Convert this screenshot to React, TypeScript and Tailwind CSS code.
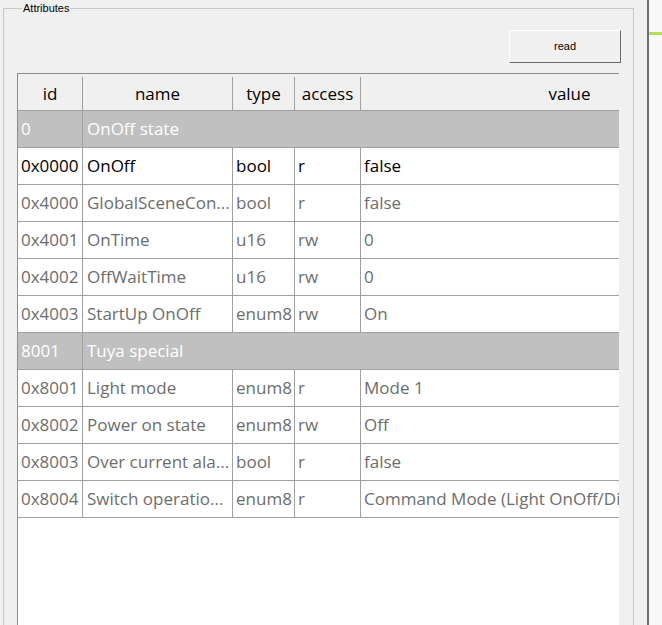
import React from 'react';

interface Attr {
  id: string;
  name: string;
  type?: string;
  access?: string;
  value?: string;
  group?: boolean;
  active?: boolean;
}

const rows: Attr[] = [
  { id: '0', name: 'OnOff state', group: true },
  { id: '0x0000', name: 'OnOff', type: 'bool', access: 'r', value: 'false', active: true },
  { id: '0x4000', name: 'GlobalSceneCon...', type: 'bool', access: 'r', value: 'false' },
  { id: '0x4001', name: 'OnTime', type: 'u16', access: 'rw', value: '0' },
  { id: '0x4002', name: 'OffWaitTime', type: 'u16', access: 'rw', value: '0' },
  { id: '0x4003', name: 'StartUp OnOff', type: 'enum8', access: 'rw', value: 'On' },
  { id: '8001', name: 'Tuya special', group: true },
  { id: '0x8001', name: 'Light mode', type: 'enum8', access: 'r', value: 'Mode 1' },
  { id: '0x8002', name: 'Power on state', type: 'enum8', access: 'rw', value: 'Off' },
  { id: '0x8003', name: 'Over current ala...', type: 'bool', access: 'r', value: 'false' },
  { id: '0x8004', name: 'Switch operatio...', type: 'enum8', access: 'r', value: 'Command Mode (Light OnOff/Dimmer)' },
];

export default function App() {
  return (
    <div
      className="flex h-[625px] w-[662px] overflow-hidden bg-[#f0f0f0]"
      style={{ fontFamily: '"Open Sans", sans-serif' }}
    >
      {/* left pane */}
      <div className="w-[647px] shrink-0 pl-[3px] pr-[13px] pt-[2px]">
        <fieldset className="h-[700px] border border-[#c8c8c8] pl-[13px] pr-[12px]">
          <legend
            className="ml-[5px] px-[1px] text-[11px] leading-[13px] text-black"
            style={{ fontFamily: '"Liberation Sans", Arial, sans-serif' }}
          >
            Attributes
          </legend>

          <div className="mt-[15px] flex justify-end">
            <button
              className="h-[33px] w-[112px] border border-t-white border-l-white border-b-[#6a6a6a] border-r-[#6a6a6a] bg-[#f0f0f0] text-[11px] text-black"
              style={{ fontFamily: '"Liberation Sans", Arial, sans-serif' }}
            >
              read
            </button>
          </div>

          <div className="mt-[10px] flex">
            <div className="h-[620px] w-[602px] overflow-hidden border-l border-t border-[#8c8c8c] bg-white">
              <div className="w-[800px] text-[17px]">
                {/* header */}
                <div className="flex h-[37px] border-b border-[#a0a0a0] bg-[#f0f0f0] pt-[3px] text-black">
                  <div className="flex w-[65px] items-center justify-center border-r border-[#a0a0a0]">id</div>
                  <div className="flex w-[150px] items-center justify-center border-r border-[#a0a0a0]">name</div>
                  <div className="flex w-[62px] items-center justify-center border-r border-[#a0a0a0]">type</div>
                  <div className="flex w-[66px] items-center justify-center border-r border-[#a0a0a0]">access</div>
                  <div className="flex w-[418px] items-center justify-center border-r border-[#a0a0a0]">value</div>
                </div>

                {rows.map((r) =>
                  r.group ? (
                    <div key={r.id} className="flex h-[37px] border-b border-[#a0a0a0] bg-[#c0c0c0] text-white">
                      <div className="flex w-[65px] items-center border-r border-[#a0a0a0] pl-[3px]">{r.id}</div>
                      <div className="flex flex-1 items-center pl-[4px]">{r.name}</div>
                    </div>
                  ) : (
                    <div
                      key={r.id}
                      className={`flex h-[37px] border-b border-[#a0a0a0] ${r.active ? 'text-black' : 'text-[#6d6d6d]'}`}
                    >
                      <div className="flex w-[65px] items-center overflow-hidden whitespace-nowrap border-r border-[#a0a0a0] pl-[3px]">{r.id}</div>
                      <div className="flex w-[150px] items-center overflow-hidden whitespace-nowrap border-r border-[#a0a0a0] pl-[4px]">{r.name}</div>
                      <div className="flex w-[62px] items-center overflow-hidden whitespace-nowrap border-r border-[#a0a0a0] pl-[3px]">{r.type}</div>
                      <div className="flex w-[66px] items-center overflow-hidden whitespace-nowrap border-r border-[#a0a0a0] pl-[3px]">{r.access}</div>
                      <div className="flex w-[418px] items-center overflow-hidden whitespace-nowrap pl-[3px]">{r.value}</div>
                    </div>
                  )
                )}
              </div>
            </div>
          </div>
        </fieldset>
      </div>

      {/* splitter */}
      <div className="w-[2px] shrink-0 bg-[#6e6e6e]" />

      {/* right pane */}
      <div className="flex-1 bg-[#f8f8f8] pt-[32px]">
        <div className="h-[3px] bg-[#b9dc5a]" />
      </div>
    </div>
  );
}
